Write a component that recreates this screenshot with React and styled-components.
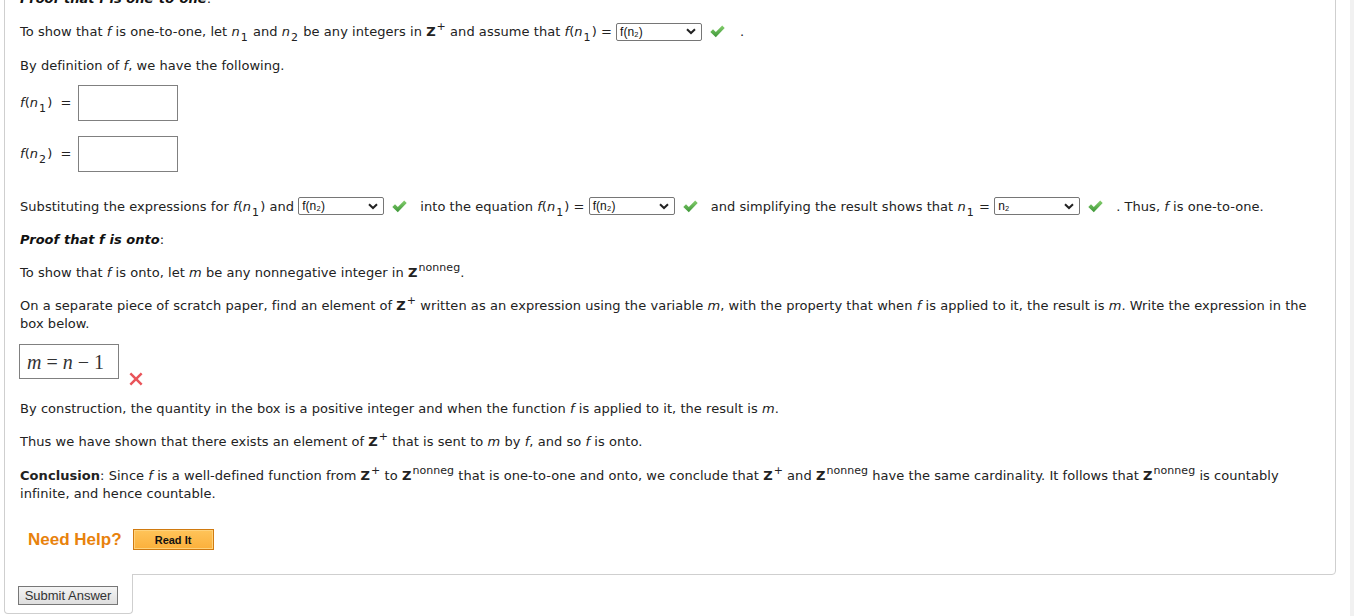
import React from "react";
import styled, { createGlobalStyle } from "styled-components";

const Global = createGlobalStyle`
  html, body { margin: 0; padding: 0; background: #fff; overflow: hidden; }
  body { width: 1354px; height: 616px; }
`;

const Page = styled.div`
  display: flex;
  width: 1354px;
  height: 616px;
  overflow: hidden;
`;

const Main = styled.div`
  flex: 1;
  padding-left: 4px;
  padding-right: 14px;
`;

const ScrollStrip = styled.div`
  width: 4px;
  height: 616px;
  background: #f1f1f1;
`;

const Card = styled.div`
  margin-top: -11px;
  border: 1px solid #cfcfcf;
  border-bottom-right-radius: 4px;
  padding: 0 15px 24px 15px;
  font-family: "DejaVu Sans", Verdana, sans-serif;
  font-size: 13px;
  letter-spacing: 0.05px;
  color: #222;
  line-height: 18px;
  background: #fff;
`;

const Para = styled.div`
  margin-top: ${(p) => p.mt || 0}px;
  line-height: 18px;
  white-space: ${(p) => (p.wrap ? "normal" : "nowrap")};
`;

const Heading = styled(Para)`
  font-weight: bold;
  font-style: italic;
  color: #111;
`;

const Plain = styled.span`
  font-weight: normal;
  font-style: normal;
`;

const I = styled.i`
  font-style: italic;
`;

const Sub = styled.span`
  font-size: 11px;
  line-height: 0;
  position: relative;
  top: 5px;
  margin: 0 1px;
`;

const Sup = styled.span`
  font-size: 11px;
  line-height: 0;
  position: relative;
  top: -6px;
  margin-left: 1px;
`;

const Z = styled.b`
  font-weight: bold;
`;

const SelectBox = styled.span`
  display: inline-flex;
  align-items: center;
  justify-content: space-between;
  box-sizing: border-box;
  width: ${(p) => p.w || 86}px;
  height: 18px;
  border: 1px solid #767676;
  border-radius: 2px;
  padding: 0 5px 0 3px;
  font-family: "Liberation Sans", Arial, sans-serif;
  font-size: 12px;
  letter-spacing: 0;
  color: #111;
  background: #fff;
  vertical-align: middle;
  position: relative;
  top: -1px;
`;

const CheckWrap = styled.span`
  display: inline-block;
  vertical-align: middle;
  margin: 0 ${(p) => p.mr ?? 14}px 0 8px;
  position: relative;
  top: -1px;
  line-height: 0;
`;

const FRow = styled.div`
  display: flex;
  align-items: center;
  margin-top: ${(p) => p.mt}px;
`;

const FLabel = styled.span`
  width: 58px;
  white-space: nowrap;
`;

const InputBox = styled.div`
  box-sizing: border-box;
  width: 100px;
  height: 36px;
  border: 1px solid #808080;
  background: #fff;
`;

const AnswerRow = styled.div`
  display: flex;
  align-items: flex-end;
  margin-top: 11px;
  margin-left: -1px;
`;

const AnswerBox = styled.div`
  box-sizing: border-box;
  width: 100px;
  height: 35px;
  border: 1px solid #808080;
  display: flex;
  align-items: center;
  padding-left: 7px;
  font-family: "Liberation Serif", "DejaVu Serif", serif;
  font-size: 20px;
  letter-spacing: 0;
  color: #333;
  white-space: nowrap;
`;

const MathOp = styled.span`
  margin: 0 5px;
`;

const XWrap = styled.span`
  margin-left: 10px;
  margin-bottom: -7px;
  line-height: 0;
`;

const HelpRow = styled.div`
  display: flex;
  align-items: center;
  margin-top: 26px;
  padding-left: 8px;
`;

const NeedHelp = styled.span`
  font-family: "Liberation Sans", Arial, sans-serif;
  font-weight: bold;
  font-size: 17px;
  letter-spacing: 0;
  color: #e8820c;
  margin-right: 11px;
`;

const ReadIt = styled.button`
  box-sizing: border-box;
  width: 81px;
  height: 21px;
  padding: 0;
  border: 1px solid #d07a10;
  box-shadow: inset 0 0 0 1px #ffd27a;
  background: linear-gradient(#ffc45a, #fbb03b);
  font-family: "Liberation Sans", Arial, sans-serif;
  font-weight: bold;
  font-size: 11px;
  color: #111;
`;

const Tab = styled.div`
  box-sizing: border-box;
  width: 129px;
  margin-top: -1px;
  background: #fff;
  border: 1px solid #cfcfcf;
  border-top: none;
  border-radius: 0 0 4px 4px;
  padding: 12px 0 8px 13px;
`;

const SubmitBtn = styled.button`
  box-sizing: border-box;
  width: 100px;
  height: 19px;
  padding: 0;
  border: 1px solid #777;
  background: linear-gradient(#f4f4f4, #dedede);
  font-family: "Liberation Sans", Arial, sans-serif;
  font-size: 13px;
  color: #333;
  line-height: 17px;
`;

const Chevron = () => (
  <svg width="10" height="7" viewBox="0 0 10 7">
    <path d="M1 1.2 L5 5 L9 1.2" fill="none" stroke="#222" strokeWidth="2" />
  </svg>
);

const Check = ({ mr }) => (
  <CheckWrap mr={mr}>
    <svg width="15" height="13" viewBox="0 0 15 13">
      <defs>
        <linearGradient id="cg" x1="0" y1="0" x2="0" y2="1">
          <stop offset="0" stopColor="#86cf6e" />
          <stop offset="1" stopColor="#3c9637" />
        </linearGradient>
      </defs>
      <path
        d="M0.3 7 L3 4.3 L5.8 7 L12.2 0.4 L14.7 3 L5.8 12.3 Z"
        fill="url(#cg)"
      />
    </svg>
  </CheckWrap>
);

const RedX = () => (
  <XWrap>
    <svg width="14" height="14" viewBox="0 0 14 14">
      <path
        d="M2.2 0.5 L7 5.2 L11.8 0.5 L13.5 2.2 L8.8 7 L13.5 11.8 L11.8 13.5 L7 8.8 L2.2 13.5 L0.5 11.8 L5.2 7 L0.5 2.2 Z"
        fill="#e9545a"
      />
    </svg>
  </XWrap>
);

const Select = ({ w, label }) => (
  <SelectBox w={w}>
    <span>{label}</span>
    <Chevron />
  </SelectBox>
);

const N = ({ k }) => (
  <>
    <I>n</I>
    <Sub>{k}</Sub>
  </>
);

const FN = ({ k }) => (
  <>
    <I>f</I>(<N k={k} />)
  </>
);

const ZP = () => (
  <>
    <Z>Z</Z>
    <Sup>+</Sup>
  </>
);

const ZN = () => (
  <>
    <Z>Z</Z>
    <Sup>nonneg</Sup>
  </>
);

export default function App() {
  return (
    <Page>
      <Global />
      <Main>
        <Card>
          <Heading>
            Proof that f is one-to-one<Plain>:</Plain>
          </Heading>
          <Para mt={15}>
            To show that <I>f</I> is one-to-one, let <N k="1" /> and <N k="2" /> be any
            integers in <ZP /> and assume that <FN k="1" /> ={" "}
            <Select label="f(n₂)" />
            <Check mr={15} />.
          </Para>
          <Para mt={15}>
            By definition of <I>f</I>, we have the following.
          </Para>
          <FRow mt={10}>
            <FLabel>
              <FN k="1" /> &nbsp;=
            </FLabel>
            <InputBox />
          </FRow>
          <FRow mt={15}>
            <FLabel>
              <FN k="2" /> &nbsp;=
            </FLabel>
            <InputBox />
          </FRow>
          <Para mt={26}>
            Substituting the expressions for <FN k="1" /> and{" "}
            <Select label="f(n₂)" />
            <Check mr={13} />
            into the equation <FN k="1" /> ={" "}
            <Select label="f(n₂)" />
            <Check mr={13} />
            and simplifying the result shows that <N k="1" /> ={" "}
            <Select label="n₂" />
            <Check mr={13} />. Thus, <I>f</I> is one-to-one.
          </Para>
          <Heading mt={15}>
            Proof that f is onto<Plain>:</Plain>
          </Heading>
          <Para mt={15}>
            To show that <I>f</I> is onto, let <I>m</I> be any nonnegative integer in{" "}
            <ZN />.
          </Para>
          <Para mt={15} wrap="1">
            On a separate piece of scratch paper, find an element of <ZP /> written as an
            expression using the variable <I>m</I>, with the property that when <I>f</I> is
            applied to it, the result is <I>m</I>. Write the expression in the box below.
          </Para>
          <AnswerRow>
            <AnswerBox>
              <I>m</I>
              <MathOp>=</MathOp>
              <I>n</I>
              <MathOp>−</MathOp>1
            </AnswerBox>
            <RedX />
          </AnswerRow>
          <Para mt={21}>
            By construction, the quantity in the box is a positive integer and when the
            function <I>f</I> is applied to it, the result is <I>m</I>.
          </Para>
          <Para mt={15}>
            Thus we have shown that there exists an element of <ZP /> that is sent to{" "}
            <I>m</I> by <I>f</I>, and so <I>f</I> is onto.
          </Para>
          <Para mt={16} wrap="1">
            <b>Conclusion</b>: Since <I>f</I> is a well-defined function from <ZP /> to{" "}
            <ZN /> that is one-to-one and onto, we conclude that <ZP /> and <ZN /> have the
            same cardinality. It follows that <ZN /> is countably infinite, and hence
            countable.
          </Para>
          <HelpRow>
            <NeedHelp>Need Help?</NeedHelp>
            <ReadIt>Read It</ReadIt>
          </HelpRow>
        </Card>
        <Tab>
          <SubmitBtn>Submit Answer</SubmitBtn>
        </Tab>
      </Main>
      <ScrollStrip />
    </Page>
  );
}
